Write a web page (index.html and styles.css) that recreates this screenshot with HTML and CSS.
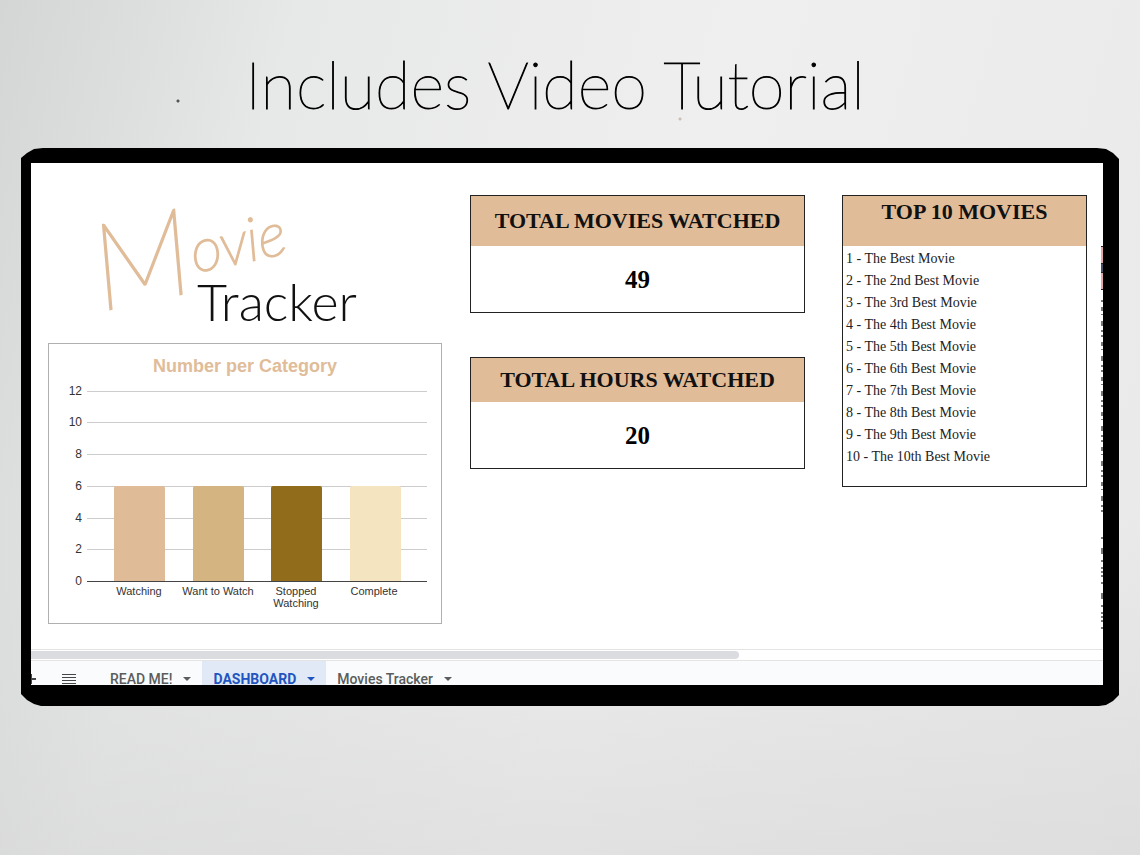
FILE: index.html
```
<!DOCTYPE html>
<html lang="en">
<head>
    <meta charset="UTF-8">
    <meta name="viewport" content="width=device-width, initial-scale=1.0">
    <title>Movie Tracker</title>
    <link rel="stylesheet" href="styles.css">
</head>
<body>
    <h1 class="page-title">Includes Video Tutorial</h1>

    <main class="tablet">
        <div class="screen">
            <div class="dashboard">
                <section class="left-column">
                    <h2 class="logo">
                        <span class="logo-movie"><span class="logo-m">M</span>ovie</span>
                        <span class="logo-tracker">Tracker</span>
                    </h2>
                    <!-- bar chart -->
                    <svg class="chart" viewBox="0 0 394 281" role="img" aria-label="Number per Category">
                        <rect class="chart-frame" x="0.5" y="0.5" width="393" height="280"/>
                        <text class="chart-title" x="197" y="29">Number per Category</text>
                        <path class="grid-lines" d="M39 48.5H379M39 79.5H379M39 111.5H379M39 143.5H379M39 175.5H379M39 206.5H379"/>
                        <path class="axis" d="M39 238.5H379"/>
                        <g class="scale">
                            <text x="34" y="52">12</text>
                            <text x="34" y="83">10</text>
                            <text x="34" y="115">8</text>
                            <text x="34" y="147">6</text>
                            <text x="34" y="179">4</text>
                            <text x="34" y="210">2</text>
                            <text x="34" y="242">0</text>
                        </g>
                        <path fill="#dfbb98" d="M66 238V145q0-2 2-2h47q2 0 2 2v93z"/>
                        <path fill="#d4b480" d="M145 238V145q0-2 2-2h47q2 0 2 2v93z"/>
                        <path fill="#916d1b" d="M223 238V145q0-2 2-2h47q2 0 2 2v93z"/>
                        <path fill="#f4e4c0" d="M302 238V145q0-2 2-2h47q2 0 2 2v93z"/>
                        <g class="labels">
                            <text x="91" y="252">Watching</text>
                            <text x="170" y="252">Want to Watch</text>
                            <text x="248" y="252">Stopped</text>
                            <text x="248" y="264">Watching</text>
                            <text x="326" y="252">Complete</text>
                        </g>
                    </svg>
                </section>

                <section class="totals">
                    <div class="card">
                        <h3 class="card-title">TOTAL MOVIES WATCHED</h3>
                        <p class="card-value">49</p>
                    </div>
                    <div class="card card-small">
                        <h3 class="card-title">TOTAL HOURS WATCHED</h3>
                        <p class="card-value">20</p>
                    </div>
                </section>

                <section class="top-movies">
                    <h3 class="top-title">TOP 10 MOVIES</h3>
                    <ul class="movie-list">
                        <li>1 - The Best Movie</li>
                        <li>2 - The 2nd Best Movie</li>
                        <li>3 - The 3rd Best Movie</li>
                        <li>4 - The 4th Best Movie</li>
                        <li>5 - The 5th Best Movie</li>
                        <li>6 - The 6th Best Movie</li>
                        <li>7 - The 7th Best Movie</li>
                        <li>8 - The 8th Best Movie</li>
                        <li>9 - The 9th Best Movie</li>
                        <li>10 - The 10th Best Movie</li>
                    </ul>
                </section>
            </div>

            <!-- next column of the sheet, cut off by the edge -->
            <svg class="next-column" viewBox="0 0 3 390" aria-hidden="true">
                <path fill="#e5a6ac" d="M1 1h2v42H1z"/>
                <path fill="#4a5068" d="M1 17h2v9H1z"/>
                <path stroke="#222" d="M1 .5h2M1 17.5h2M1 26.5h2M1 43.5h2"/>
                <path stroke="#777" stroke-width="2" stroke-dasharray="2 5 4 3 1 6 5 4 2 3" d="M2 54V270"/>
                <path stroke="#777" stroke-width="2" stroke-dasharray="2 9 6 6 2 5 2 2 2 2 2 5" d="M2 291V387"/>
            </svg>

            <div class="scroll-track"><div class="scroll-thumb"></div></div>
            <nav class="sheet-bar">
                <button class="icon-button add" aria-label="Add sheet">
                    <svg width="12" height="12" viewBox="0 0 12 12"><path d="M6 1v10M1 6h10" stroke="#444746" stroke-width="2"/></svg>
                </button>
                <button class="icon-button all" aria-label="All sheets">
                    <svg width="14" height="10" viewBox="0 0 14 10"><path d="M0 .5h14M0 3.5h14M0 6.5h14M0 9.5h14" stroke="#444746"/></svg>
                </button>
                <button class="tab">READ ME! <span class="arrow"></span></button>
                <button class="tab active">DASHBOARD <span class="arrow"></span></button>
                <button class="tab">Movies Tracker <span class="arrow"></span></button>
            </nav>
        </div>
    </main>
</body>
</html>
```
FILE: styles.css
```
* {
    box-sizing: border-box;
}
body {
    margin: 0;
    padding: 46px 21px 0;
    min-height: 100vh;
    font-family: "Liberation Sans", Arial, sans-serif;
    background:
        radial-gradient(circle at 178px 101px, #555 1px, transparent 2px),
        radial-gradient(circle at 680px 119px, #c9bfb4 1px, transparent 2px),
        linear-gradient(180deg, transparent 60%, rgba(205, 205, 205, 0.4)),
        linear-gradient(105deg, #d3d6d5 0, #e7e8e8 22%, #efefef 55%, #e9e9e9 100%);
}
h1, h2, h3, p, ul {
    margin: 0;
    padding: 0;
}
.page-title {
    height: 102px;
    padding-right: 30px;
    font-family: Lato, sans-serif;
    font-size: 65px;
    font-weight: 100;
    line-height: 76px;
    text-align: center;
    color: #000;
    -webkit-text-stroke: 1px #000;
}
.tablet {
    padding: 15px 16px 21px 10px;
    background: #000;
    /* cut corners */
    clip-path: polygon(
        0 10px, 6px 5px, 13px 1px, 22px 0,
        calc(100% - 22px) 0, calc(100% - 13px) 1px, calc(100% - 6px) 5px, 100% 11px,
        100% calc(100% - 11px), calc(100% - 6px) calc(100% - 5px), calc(100% - 13px) calc(100% - 1px), calc(100% - 20px) 100%,
        20px 100%, 13px calc(100% - 2px), 6px calc(100% - 6px), 0 calc(100% - 12px)
    );
}
.screen {
    position: relative;
    background: #fff;
    overflow: hidden;
}
.dashboard {
    display: grid;
    grid-template-columns: 394fr 335fr 254fr;
    column-gap: 28px;
    align-items: start;
    padding: 32px 16px 25px 17px;
}
.logo {
    display: flex;
    flex-direction: column;
    height: 148px;
    padding-left: 40px;
    font-family: Lato, sans-serif;
    font-weight: 300;
}
.logo-movie {
    align-self: flex-start;
    height: 82px;
    font-size: 60px;
    font-style: italic;
    font-weight: 100;
    line-height: 102px;
    color: #e0bc98;
    -webkit-text-stroke: 2px #e0bc98;
    transform: rotate(-12deg);
}
.logo-m {
    font-size: 120px;
    vertical-align: -18px;
}
.logo-tracker {
    padding-left: 109px;
    font-size: 52px;
    line-height: 48px;
    color: #111;
}
.chart {
    display: block;
    width: 100%;
}
.chart-frame {
    fill: #fff;
    stroke: #b0b0b0;
}
.chart-title {
    font-size: 18px;
    font-weight: bold;
    fill: #e0bc98;
    text-anchor: middle;
}
.grid-lines {
    stroke: #ccc;
}
.axis {
    stroke: #444;
}
.scale, .labels {
    fill: #333;
}
.scale {
    font-size: 12px;
    text-anchor: end;
}
.labels {
    font-size: 11px;
    text-anchor: middle;
}
.totals {
    display: grid;
    gap: 44px;
}
.card, .top-movies {
    border: 1px solid #222;
    font-family: "Liberation Serif", "Times New Roman", serif;
}
.card-title, .top-title {
    background: #e0bc98;
    font-size: 22px;
    text-align: center;
    color: #111;
}
.card-title {
    line-height: 50px;
}
.card-value {
    padding-top: 2px;
    font-size: 25px;
    font-weight: bold;
    line-height: 64px;
    text-align: center;
}
.card-small .card-title {
    line-height: 44px;
}
.top-movies {
    margin-left: 9px;
}
.top-title {
    height: 50px;
    line-height: 32px;
}
.movie-list {
    padding: 2px 3px 18px;
    list-style: none;
    font-size: 14px;
    line-height: 22px;
    color: #222;
}
.next-column {
    position: absolute;
    top: 83px;
    right: 0;
    width: 3px;
}
.scroll-track {
    height: 12px;
    padding-top: 1px;
    border-top: 1px solid #e4e4e4;
    border-bottom: 1px solid #e4e4e4;
}
.scroll-thumb {
    width: 66%;
    height: 8px;
    border-radius: 0 4px 4px 0;
    background: #dadce0;
}
.sheet-bar {
    display: flex;
    height: 24px;
    background: #f9fbfd;
    overflow: hidden;
}
button {
    padding: 0;
    border: none;
    background: none;
    cursor: pointer;
}
.icon-button {
    display: flex;
    height: 36px;
    align-items: center;
}
.add {
    width: 31px;
    margin-left: -6px;
}
.all {
    width: 43px;
    padding-left: 6px;
}
.tab {
    display: flex;
    align-items: center;
    gap: 11px;
    height: 36px;
    padding: 0 11px;
    font-family: Roboto, sans-serif;
    font-size: 14px;
    font-weight: 500;
    color: #5a5d5c;
}
.tab.active {
    background: #e1e9f7;
    font-weight: bold;
    color: #1f55c0;
}
.arrow {
    border: 4px solid transparent;
    border-top-color: currentColor;
    border-bottom: none;
}
```
